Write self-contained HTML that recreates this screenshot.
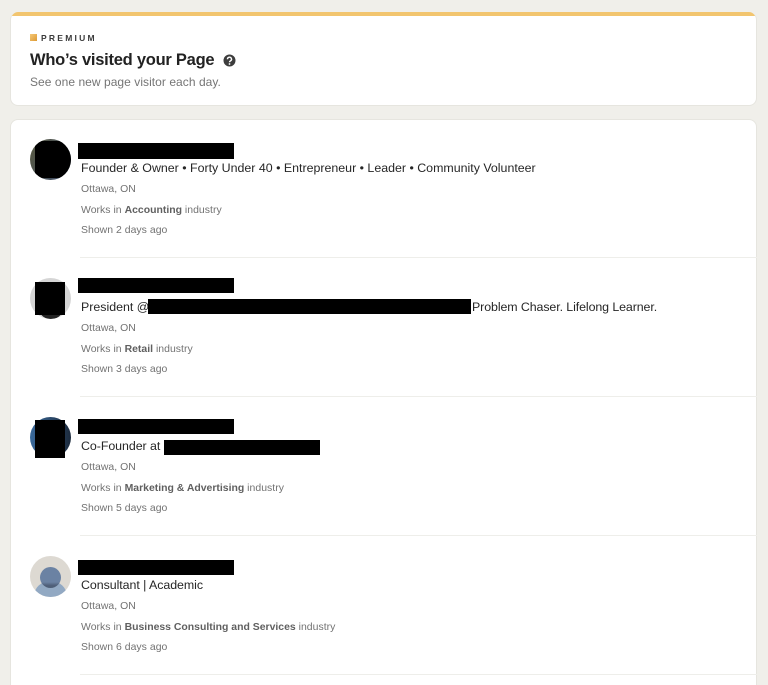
<!DOCTYPE html>
<html>
<head>
<meta charset="utf-8">
<style>
html,body{margin:0;padding:0;width:768px;height:685px;overflow:hidden;background:#f0efea;font-family:"Liberation Sans",sans-serif;}
#w{position:relative;width:768px;height:685px;overflow:hidden;background:#f0efea;filter:blur(.25px);}
.a{position:absolute;white-space:nowrap;}
.card{position:absolute;left:9.5px;width:747px;background:#fff;box-sizing:border-box;border:1px solid #e6e5df;border-radius:8px;}
.h{font-size:12.4px;color:#262626;line-height:16px;left:81px;}
.s{font-size:10.45px;color:#727272;line-height:14px;left:81px;letter-spacing:.03px;}
.s b{color:#606060;letter-spacing:0;}
.k{position:absolute;background:#000;}
.av{position:absolute;left:30px;width:41px;height:41px;border-radius:50%;overflow:hidden;}
.ln{position:absolute;left:80px;right:11px;height:1px;background:#eeeeea;}
</style>
</head>
<body>
<div id="w">
<div class="card" style="top:12px;height:94px;overflow:hidden;border-top:0;">
  <div style="position:absolute;left:0;right:0;top:0;height:4px;background:#f2c56f;"></div>
</div>
<div class="a" style="left:30px;top:34px;width:7px;height:7px;background:linear-gradient(135deg,#f5c877,#dd9a35);"></div>
<div class="a" style="left:41px;top:32px;font-size:8.5px;line-height:12px;font-weight:bold;letter-spacing:2.25px;color:#3a3a3a;">PREMIUM</div>
<div class="a" style="left:30px;top:50px;font-size:16.5px;line-height:21px;font-weight:bold;color:#222;letter-spacing:-.25px;">Who’s visited your Page</div>
<svg class="a" style="left:223px;top:54px;" width="13" height="13" viewBox="0 0 13 13">
  <circle cx="6.5" cy="6.5" r="6" fill="#3d3d3d"/>
  <path d="M4.5 5.2a2 2 0 1 1 3 1.7c-.7.4-1 .7-1 1.3" fill="none" stroke="#fff" stroke-width="1.4"/>
  <circle cx="6.5" cy="10" r=".9" fill="#fff"/>
</svg>
<div class="a" style="left:30px;top:75px;font-size:12px;line-height:15px;color:#757575;letter-spacing:.05px;">See one new page visitor each day.</div>

<div class="card" style="top:118.5px;height:600px;"></div>

<!-- 1 -->
<div class="av" style="top:139px;background:linear-gradient(120deg,#5a5a40,#3a4a6a);">
  <div class="k" style="left:5px;top:2px;width:36px;height:37px;"></div>
</div>
<div class="k" style="left:78px;top:143px;width:156px;height:15.5px;"></div>
<div class="a h" style="top:160px;">Founder &amp; Owner • Forty Under 40 • Entrepreneur • Leader • Community Volunteer</div>
<div class="a s" style="top:183px;">Ottawa, ON</div>
<div class="a s" style="top:204px;">Works in <b>Accounting</b> industry</div>
<div class="a s" style="top:224px;">Shown 2 days ago</div>
<div class="ln" style="top:257px;"></div>

<!-- 2 -->
<div class="av" style="top:278px;background:#d5d5d5;"><div style="position:absolute;left:10px;top:25px;width:22px;height:16px;border-radius:50%;background:#222;"></div></div>
<div class="k" style="left:35px;top:282px;width:30px;height:33px;"></div>
<div class="k" style="left:78px;top:278px;width:156px;height:15px;"></div>
<div class="a h" style="top:298.5px;">President @</div>
<div class="k" style="left:148px;top:299px;width:323px;height:15px;"></div>
<div class="a h" style="left:472px;top:298.5px;letter-spacing:-.09px;">Problem Chaser. Lifelong Learner.</div>
<div class="a s" style="top:322px;">Ottawa, ON</div>
<div class="a s" style="top:343px;">Works in <b>Retail</b> industry</div>
<div class="a s" style="top:363px;">Shown 3 days ago</div>
<div class="ln" style="top:396px;"></div>

<!-- 3 -->
<div class="av" style="top:417px;background:linear-gradient(90deg,#3a6a9c,#1c2a3c);"></div>
<div class="k" style="left:35px;top:420px;width:30px;height:38px;"></div>
<div class="k" style="left:78px;top:419px;width:156px;height:15px;"></div>
<div class="a h" style="top:438px;letter-spacing:-.05px;">Co-Founder at</div>
<div class="k" style="left:164px;top:440px;width:156px;height:15px;"></div>
<div class="a s" style="top:461px;">Ottawa, ON</div>
<div class="a s" style="top:482px;">Works in <b>Marketing &amp; Advertising</b> industry</div>
<div class="a s" style="top:502px;">Shown 5 days ago</div>
<div class="ln" style="top:535px;"></div>

<!-- 4 -->
<div class="av" style="top:556px;background:#ddd9d2;">
  <div style="position:absolute;left:4px;top:25px;width:33px;height:30px;border-radius:50%;background:#92a9c3;"></div>
  <div style="position:absolute;left:10px;top:11px;width:21px;height:21px;border-radius:50%;background:linear-gradient(180deg,#6b82a3 72%,#4f5f78 88%);"></div>
</div>
<div class="k" style="left:78px;top:560px;width:156px;height:15px;"></div>
<div class="a h" style="top:577px;letter-spacing:-.05px;">Consultant | Academic</div>
<div class="a s" style="top:600px;">Ottawa, ON</div>
<div class="a s" style="top:621px;">Works in <b>Business Consulting and Services</b> industry</div>
<div class="a s" style="top:641px;">Shown 6 days ago</div>
<div class="ln" style="top:674px;"></div>
</div>
</body>
</html>
